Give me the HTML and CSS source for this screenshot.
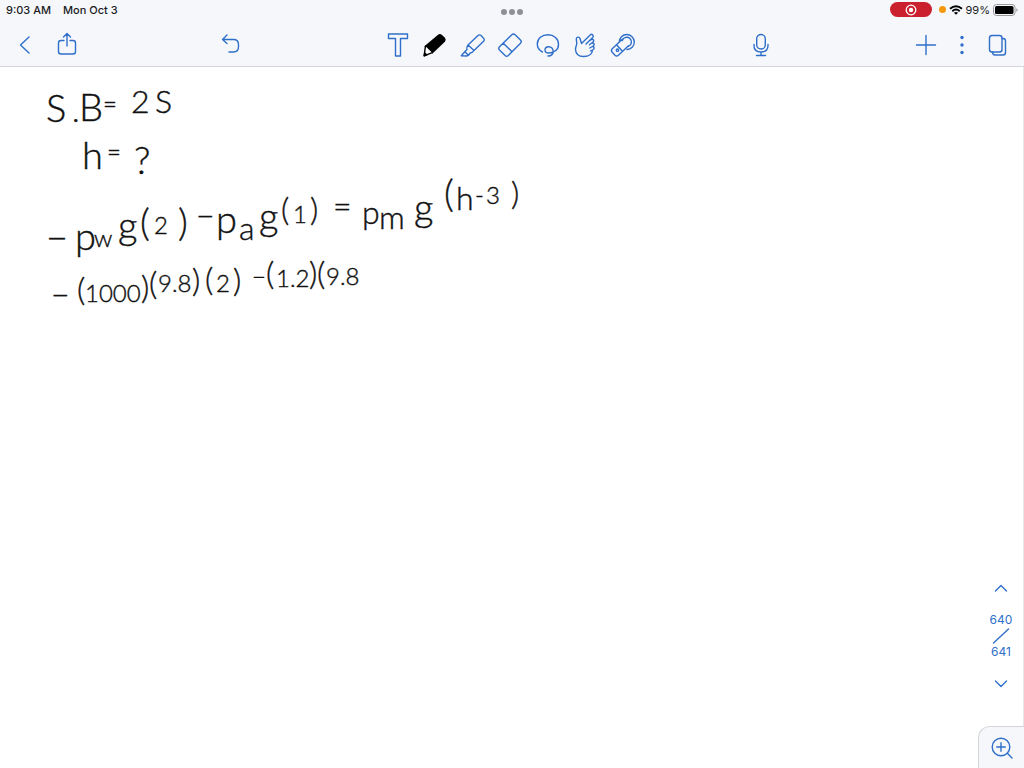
FILE: index.html
```html
<!DOCTYPE html>
<html lang="en">
<head>
    <meta charset="utf-8">
    <meta name="viewport" content="width=device-width, initial-scale=1">
    <title>Notes</title>
    <link rel="stylesheet" href="styles.css">
</head>
<body>
    <header class="head">
        <div class="status">
            <div class="when"><span>9:03 AM</span><span>Mon Oct 3</span></div>
            <div class="dots"><i></i><i></i><i></i></div>
            <div class="sys">
                <span class="rec"><svg width="12" height="12" viewBox="0 0 12 12"><circle cx="6" cy="6" r="4.8" fill="none" stroke="#fff" stroke-width="1.3"/><circle cx="6" cy="6" r="2.2" fill="#fff"/></svg></span>
                <span class="mic-on"></span>
                <svg width="14" height="10" viewBox="0 0 14 10" fill="none" stroke="#000" stroke-width="1.9"><path d="M1 3.8Q7-1.4 13 3.8M3.3 6.2Q7 3 10.7 6.2"/><path d="M7 9.8 4.9 7.7Q7 6.1 9.1 7.7Z" fill="#000" stroke="none"/></svg>
                <span class="pct">99%</span>
                <svg width="25" height="12" viewBox="0 0 25 12"><rect x=".5" y=".5" width="21.5" height="11" rx="3" fill="none" stroke="#999"/><rect x="2" y="2" width="18.5" height="8" rx="1.6"/><path d="M23.3 4.2v3.6q1.4-.6 1.4-1.8t-1.4-1.8z" fill="#999"/></svg>
            </div>
        </div>
        <nav class="bar">
            <div class="left">
                <button type="button" aria-label="Back"><svg viewBox="0 0 28 28"><path d="M18 6 9.500 14 18 22"/></svg></button>
                <button type="button" aria-label="Share"><svg viewBox="0 0 28 28"><path d="M11 9.500H8Q5.500 9.500 5.500 12V20.500Q5.500 23 8 23H20Q22.500 23 22.500 20.500V12Q22.500 9.500 20 9.500H17M14 15V2.500M10.500 6 14 2.500 17.500 6"/></svg></button>
                <button type="button" class="undo" aria-label="Undo"><svg viewBox="0 0 28 28"><path d="M10 4 5.500 8.500 10 12.500M5.500 8.500H16.500Q21.500 8.500 21.500 13.500V15.500Q21.500 21 16.500 21H12"/></svg></button>
            </div>
            <div class="tools">
                <button type="button" aria-label="Text"><svg viewBox="0 0 28 28"><path d="M4.500 3H23.500V7.500H16.500V25H11.500V7.500H4.500Z"/></svg></button>
                <button type="button" aria-label="Pen" aria-pressed="true"><svg class="pen" viewBox="0 0 28 28"><path d="M17.500 4.200Q19 3 20.500 4.400L23.400 7.300Q24.600 8.800 23.400 10.200L11.300 21.700 4.400 15.200Z" fill="#000"/><path d="M4.400 15.200 3.200 24.800 11.200 21.700" fill="#fff"/><path d="M3.200 24.800 3.600 22 5.800 23.900Z" fill="#000"/></svg></button>
                <button type="button" aria-label="Highlighter"><svg viewBox="0 0 28 28"><path d="M9 14 19 4.500Q20.500 3.200 22 4.600L24.800 7.400Q26 8.800 24.600 10.300L15 19.500ZM9 14Q7.300 16.500 8 18.500L5.800 20.800 9.500 24.200 11.200 22Q13.500 22 15 19.500M5.800 20.800 2.300 24.700 7.800 25 9.500 24.200"/></svg></button>
                <button type="button" aria-label="Eraser"><svg viewBox="0 0 28 28"><path d="M15.800 3.700Q17.500 2.200 19.100 3.700L24.500 9Q26 10.600 24.500 12.200L12.300 24.500Q10.700 26 9.100 24.500L3.500 19Q2 17.400 3.500 15.800ZM7.300 12.200 16 20.800"/></svg></button>
                <button type="button" aria-label="Lasso"><svg viewBox="0 0 28 28"><path d="M8.500 21Q3.300 18.500 3.300 13C3.300 7.500 8 3.800 14 3.800S24.500 7.700 24.500 13.500C24.500 19 20 22 14.500 22C10 22 9.700 16 14.500 15.700C20.500 15.400 21 24.800 14 25"/></svg></button>
                <button type="button" aria-label="Pointer"><svg viewBox="0 0 28 28"><path d="M15 13 21.700 6.500C23.300 4.700 21 2.300 19.200 4L10.500 12.500 9 7.500C8.300 5.300 5 5.800 5.300 8.200L5.800 12.500C5.500 14.500 4.500 16 4.500 18.500C4.800 23 8 25.500 12.500 25.500C17.500 25.500 21 23.500 21.500 19.500M18 10 20.500 8.500C22.500 7.800 23.500 9.800 22 11L18.500 13.700M20.500 12.200C23 11.500 24 13.800 22.300 15L18.800 17M21.500 15.500C23.500 15.500 23.500 17.700 22.300 18.500L19.500 20"/></svg></button>
                <button type="button" aria-label="Tape"><svg viewBox="0 0 28 28"><path d="M10.300 11A7.500 7.500 0 1 1 18 18.500M13.300 9.500A4.700 4.700 0 1 1 19.500 15.300M13.300 8.300 3.200 17.700Q1.600 19.500 3.200 21.200L6 24.200Q7.700 25.700 9.400 24.200L19.500 14.700M7.500 13.700 13.500 20.300"/><circle cx="8.500" cy="19.200" r="1.200"/></svg></button>
            </div>
            <div class="right">
                <button type="button" class="mic" aria-label="Record"><svg viewBox="0 0 28 28"><rect x="9.700" y="3.500" width="8.600" height="14.500" rx="4.300"/><path d="M7 13.500V14.500Q7 21 14 21T21 14.500V13.500M14 21V24.500M9.500 24.500H18.500"/></svg></button>
                <button type="button" aria-label="Add"><svg viewBox="0 0 28 28"><path d="M14 4.500V23.500M4.500 14H23.500"/></svg></button>
                <button type="button" aria-label="More"><svg class="full" viewBox="0 0 28 28"><circle cx="14" cy="6.500" r="1.700"/><circle cx="14" cy="14" r="1.700"/><circle cx="14" cy="21.500" r="1.700"/></svg></button>
                <button type="button" aria-label="Pages"><svg viewBox="0 0 28 28"><rect x="5.500" y="4.500" width="12.500" height="16.500" rx="2.500"/><path d="M18 7.500H19Q21.500 7.500 21.500 10V21.500Q21.500 24 19 24H11Q8.500 24 8.500 21"/></svg></button>
            </div>
        </nav>
    </header>

    <main class="page">
        <!-- handwritten notes, one group per line -->
        <svg class="ink" width="540" height="260" viewBox="0 66 540 260">
            <g>
                <text class="xl" x="46" y="121">S</text><text class="l" x="72" y="121">.</text><text class="xl" x="79" y="120">B</text><text class="s" x="103" y="112">=</text><text class="l" x="131" y="112">2</text><text class="l" x="155" y="112">S</text>
            </g>
            <g>
                <text class="xl" x="82" y="168">h</text><text class="s" x="107" y="160">=</text><text class="xl" x="134" y="173">?</text>
            </g>
            <g>
                <text class="xl" x="46" y="250">−</text><text class="xl" x="75" y="249">p</text><text class="s" x="94" y="246">w</text><text class="xl" x="118" y="238">g</text><text class="xl" x="140" y="235">(</text><text class="s" x="154" y="233">2</text><text class="xl" x="178" y="235">)</text>
                <text class="l" x="196" y="226">−</text><text class="xl" x="216" y="232">p</text><text class="l" x="239" y="239">a</text><text class="xl" x="259" y="229">g</text><text class="l" x="281" y="220">(</text><text class="s" x="293" y="222">1</text><text class="l" x="310" y="220">)</text>
                <text class="l" x="333" y="217">=</text><text class="l" x="362" y="223">p</text><text class="l" x="379" y="228">m</text><text class="xl" x="414" y="220">g</text><text class="xl" x="444" y="206">(</text><text class="l" x="456" y="209">h</text><text class="s" x="475" y="203">-</text><text class="s" x="486" y="203">3</text><text class="l" x="511" y="204">)</text>
            </g>
            <g>
                <text class="l" x="51" y="305">−</text><text class="l" x="77" y="300">(</text><text class="s" x="85" y="301">1000</text><text class="l" x="141" y="298">)</text><text class="l" x="149" y="294">(</text><text class="s" x="158" y="291">9.8</text><text class="l" x="192" y="291">)</text>
                <text class="l" x="205" y="290">(</text><text class="s" x="216" y="291">2</text><text class="l" x="233" y="291">)</text><text class="s" x="252" y="284">−</text><text class="l" x="266" y="284">(</text><text class="s" x="276" y="286">1.2</text><text class="l" x="309" y="284">)</text><text class="l" x="317" y="284">(</text><text class="s" x="326" y="284">9.8</text>
            </g>
        </svg>
        <nav class="pager">
            <button type="button" aria-label="Previous page"><svg viewBox="0 0 16 10"><path d="M2.500 8 8 2.500 13.500 8"/></svg></button>
            <span>640</span>
            <svg class="slash" viewBox="0 0 18 16"><path d="M1.500 15 16.500 1"/></svg>
            <span>641</span>
            <button type="button" aria-label="Next page"><svg viewBox="0 0 16 10"><path d="M2.500 2 8 7.500 13.500 2"/></svg></button>
        </nav>
        <button type="button" class="zoom" aria-label="Zoom in"><svg viewBox="0 0 24 24"><circle cx="11" cy="11" r="8.800"/><path d="M17.300 17.300 22 22M11 6.700V15.300M6.700 11H15.300"/></svg></button>
    </main>
</body>
</html>
```
FILE: styles.css
```css
* { box-sizing: border-box; }
body { margin: 0; min-height: 100vh; display: flex; flex-direction: column; background: #fff; color: #1c1c1e; font-family: Inter, "Liberation Sans", sans-serif; font-size: 12px; }
button { display: flex; align-items: center; justify-content: center; padding: 0; border: 0; background: none; color: #2f6fca; font: inherit; cursor: pointer; }
svg { display: block; flex: none; }

.head { background: #f5f7fb; border-bottom: 1px solid #d3d5d9; }
.status { display: grid; grid-template-columns: 1fr auto 1fr; align-items: center; height: 19px; padding: 0 6px; }
.when { display: flex; gap: 12px; font-size: 11px; font-weight: 500; }
.dots { display: flex; gap: 2px; padding-top: 4px; }
.dots i { width: 6px; height: 6px; border-radius: 50%; background: #8e9095; }
.sys { display: flex; align-items: center; justify-content: flex-end; gap: 3px; }
.rec { display: flex; align-items: center; justify-content: center; width: 42px; height: 15px; margin-right: 4px; border-radius: 8px; background: #cb202d; }
.mic-on { width: 7px; height: 7px; border-radius: 50%; background: #f39a0b; }
.pct { font-size: 11px; }

.bar { display: grid; grid-template-columns: 1fr auto 1fr; align-items: center; height: 47px; padding: 5px 12px 0 11px; }
.bar button { width: 28px; height: 28px; }
.bar svg { width: 28px; height: 28px; }
.bar svg, .pager svg, .zoom svg { fill: none; stroke: #2f6fca; stroke-width: 1.4; stroke-linecap: round; stroke-linejoin: round; }
.bar .pen { stroke: #000; }
.bar .full { fill: #2f6fca; stroke: none; }
.left { display: flex; gap: 14px; }
.undo { margin-left: 122px; }
.tools { display: flex; justify-content: space-between; width: 253px; margin-right: 3px; }
.right { display: flex; justify-content: flex-end; gap: 8px; }
.mic { margin-right: 129px; }

.page { position: relative; flex: 1; border-right: 1px solid #e6e7ea; }
.ink { fill: #111; stroke: #111; stroke-width: .4px; font-family: Lato, sans-serif; font-weight: 300; }
.ink .xl { font-size: 38px; }
.ink .l { font-size: 32px; }
.ink .s { font-size: 24px; }

/* floating controls over the paper */
.pager { position: absolute; right: 8px; bottom: 76px; display: flex; flex-direction: column; align-items: center; width: 28px; color: #2f6fca; font-size: 12px; line-height: 16px; }
.pager button { width: 28px; height: 16px; }
.pager button svg { width: 16px; height: 10px; }
.pager button:first-child { margin-bottom: 16px; }
.pager button:last-child { margin-top: 16px; }
.slash { width: 18px; height: 16px; }
.zoom { position: absolute; right: -1px; bottom: 0; width: 46px; height: 42px; border: 1px solid #d3d5d9; border-width: 1px 0 0 1px; border-radius: 12px 0 0 0; background: #f5f7fb; }
.zoom svg { width: 24px; height: 24px; }
```
